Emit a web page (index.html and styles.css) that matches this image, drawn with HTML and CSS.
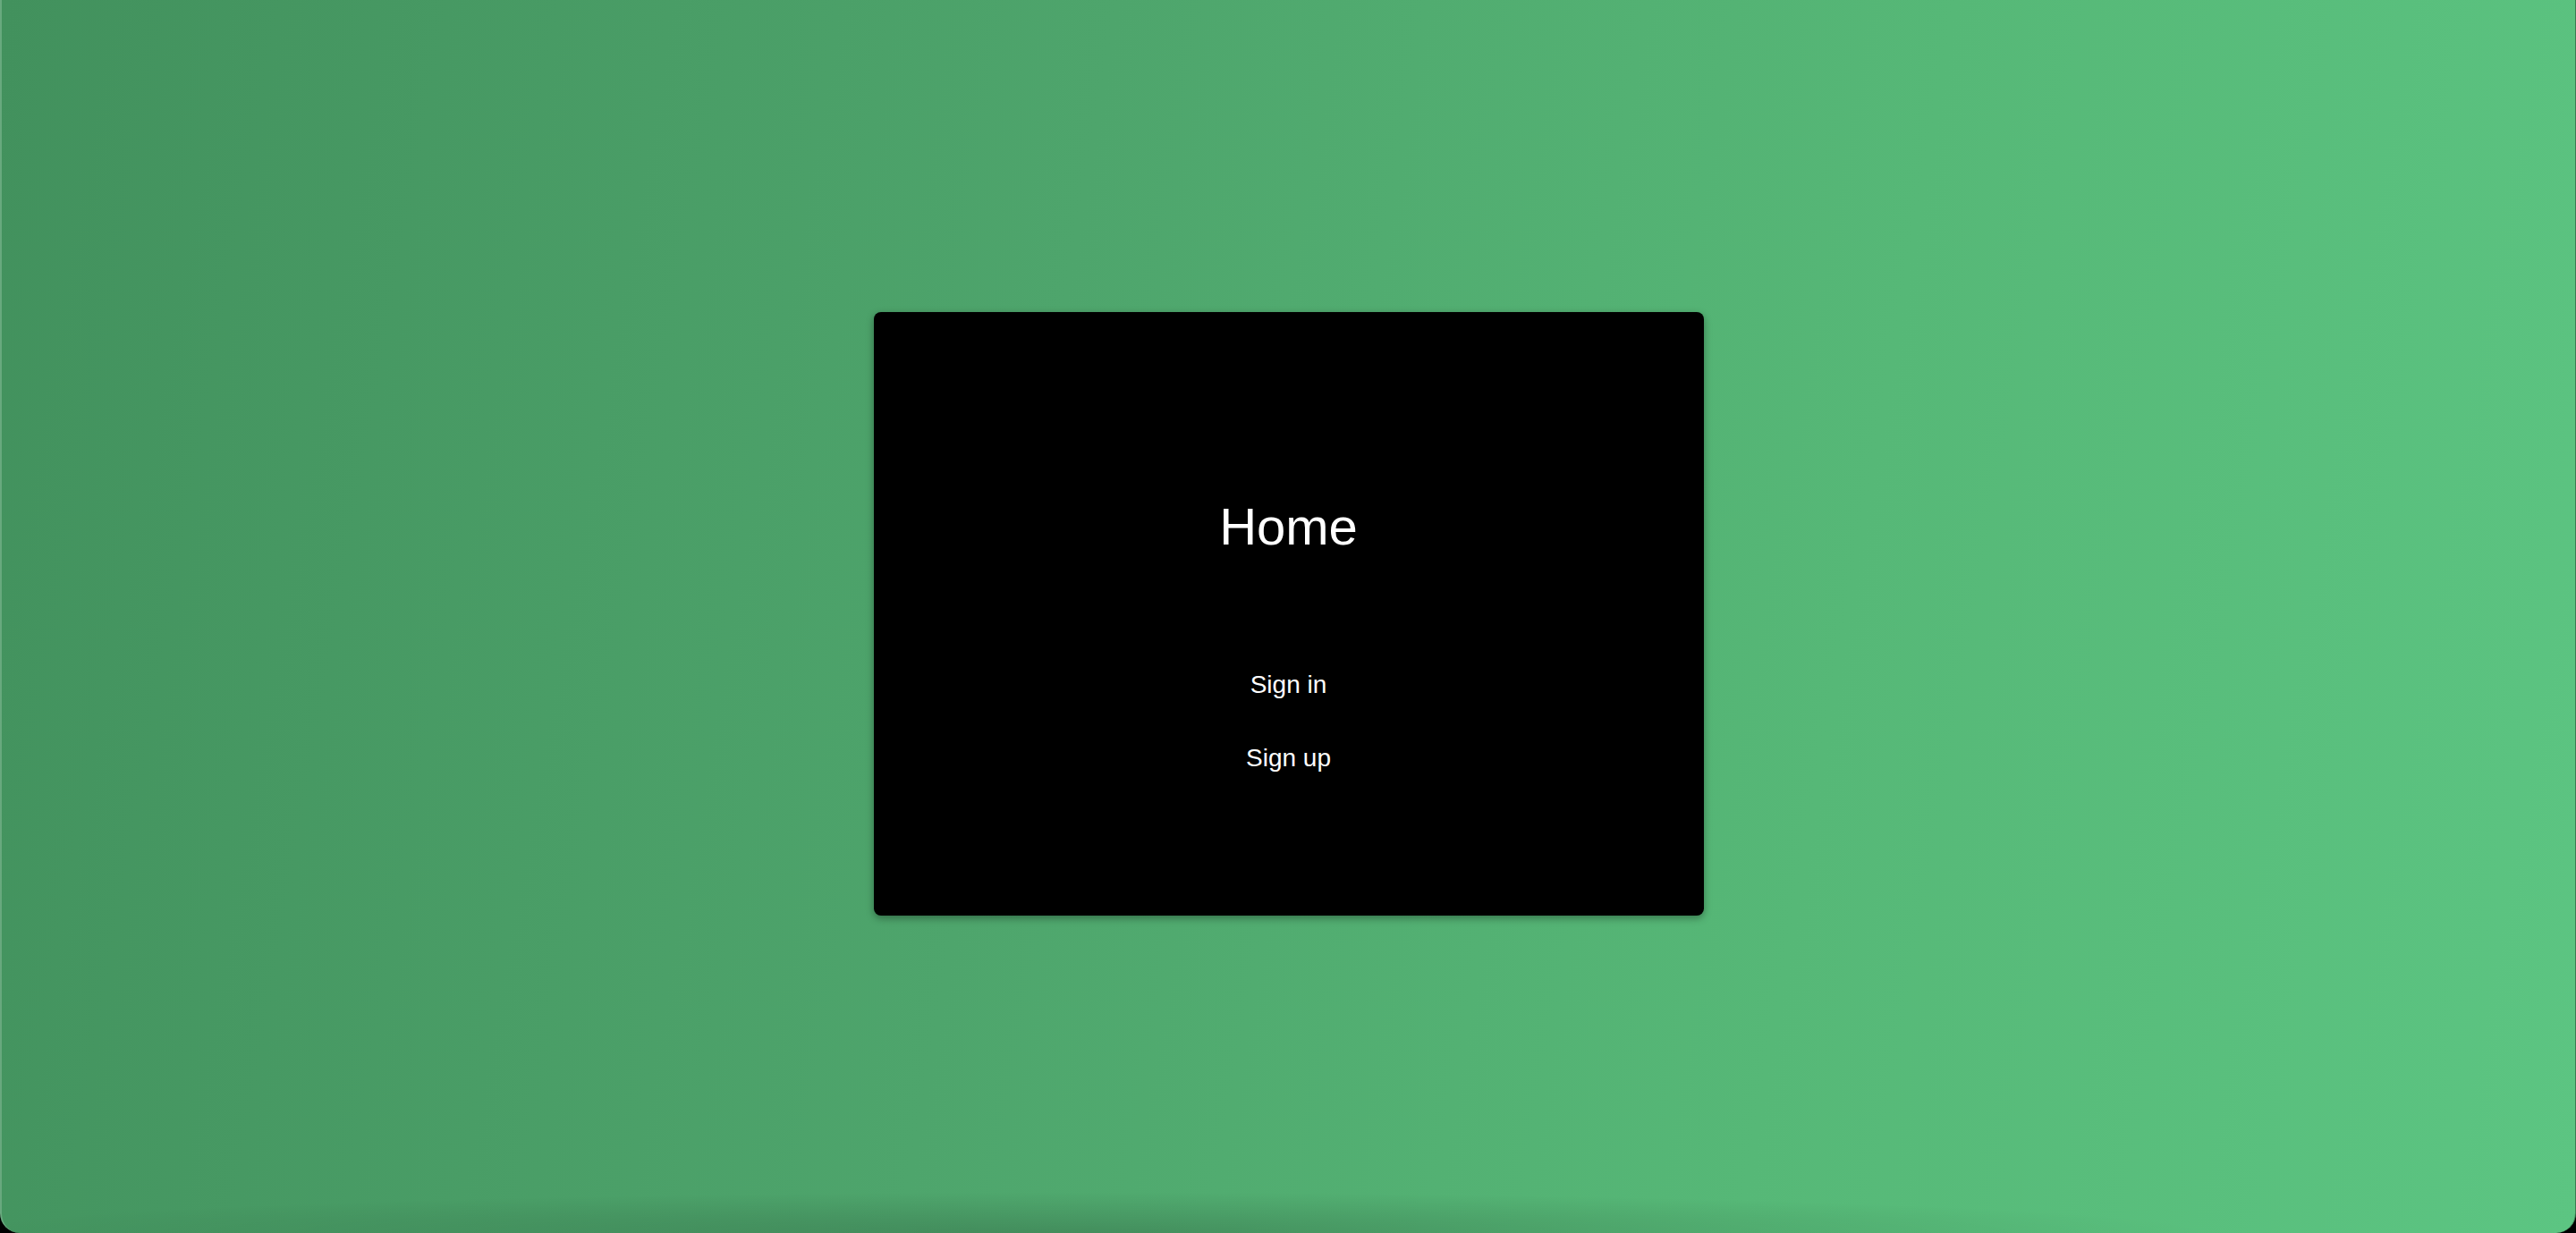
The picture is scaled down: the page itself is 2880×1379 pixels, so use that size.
FILE: index.html
```html
<!DOCTYPE html>
<html lang="en">
<head>
<meta charset="utf-8">
<title>Home</title>
<link rel="stylesheet" href="styles.css">
</head>
<body>
<div class="window">
  <main class="card">
    <h1 class="title">Home</h1>
    <nav class="links">
      <a class="link" href="#">Sign in</a>
      <a class="link" href="#">Sign up</a>
    </nav>
  </main>
</div>
</body>
</html>
```
FILE: styles.css
```css
html, body {
  margin: 0;
  padding: 0;
  height: 100%;
  background: #000;
  overflow: hidden;
}

.window {
  box-sizing: border-box;
  height: 100vh;
  display: flex;
  align-items: center;
  justify-content: center;
  padding-bottom: 6px;
  border-radius: 0 0 22px 22px;
  border-left: 2px solid #68a97e;
  border-right: 1px solid #3d7a52;
  background:
    radial-gradient(ellipse 44% 46px at 42% 100%, rgba(0, 0, 0, 0.16), rgba(0, 0, 0, 0)),
    linear-gradient(100deg, #42915d 0%, #4ea56c 40%, #56b877 70%, #5cc582 100%);
  font-family: "Liberation Sans", Arial, sans-serif;
}

.card {
  box-sizing: border-box;
  width: 928px;
  height: 675px;
  padding: 205px 0 156px;
  background: #000;
  border-radius: 8px;
  box-shadow: 0 3px 8px rgba(0, 0, 0, 0.35);
  display: flex;
  flex-direction: column;
  align-items: center;
  color: #fff;
}

.title {
  margin: 0;
  font-size: 58px;
  font-weight: 400;
  line-height: 70px;
}

.links {
  margin-top: 122px;
  display: flex;
  flex-direction: column;
  align-items: center;
  gap: 42px;
}

.link {
  color: #fff;
  text-decoration: none;
  font-size: 28px;
  line-height: 40px;
}
```
